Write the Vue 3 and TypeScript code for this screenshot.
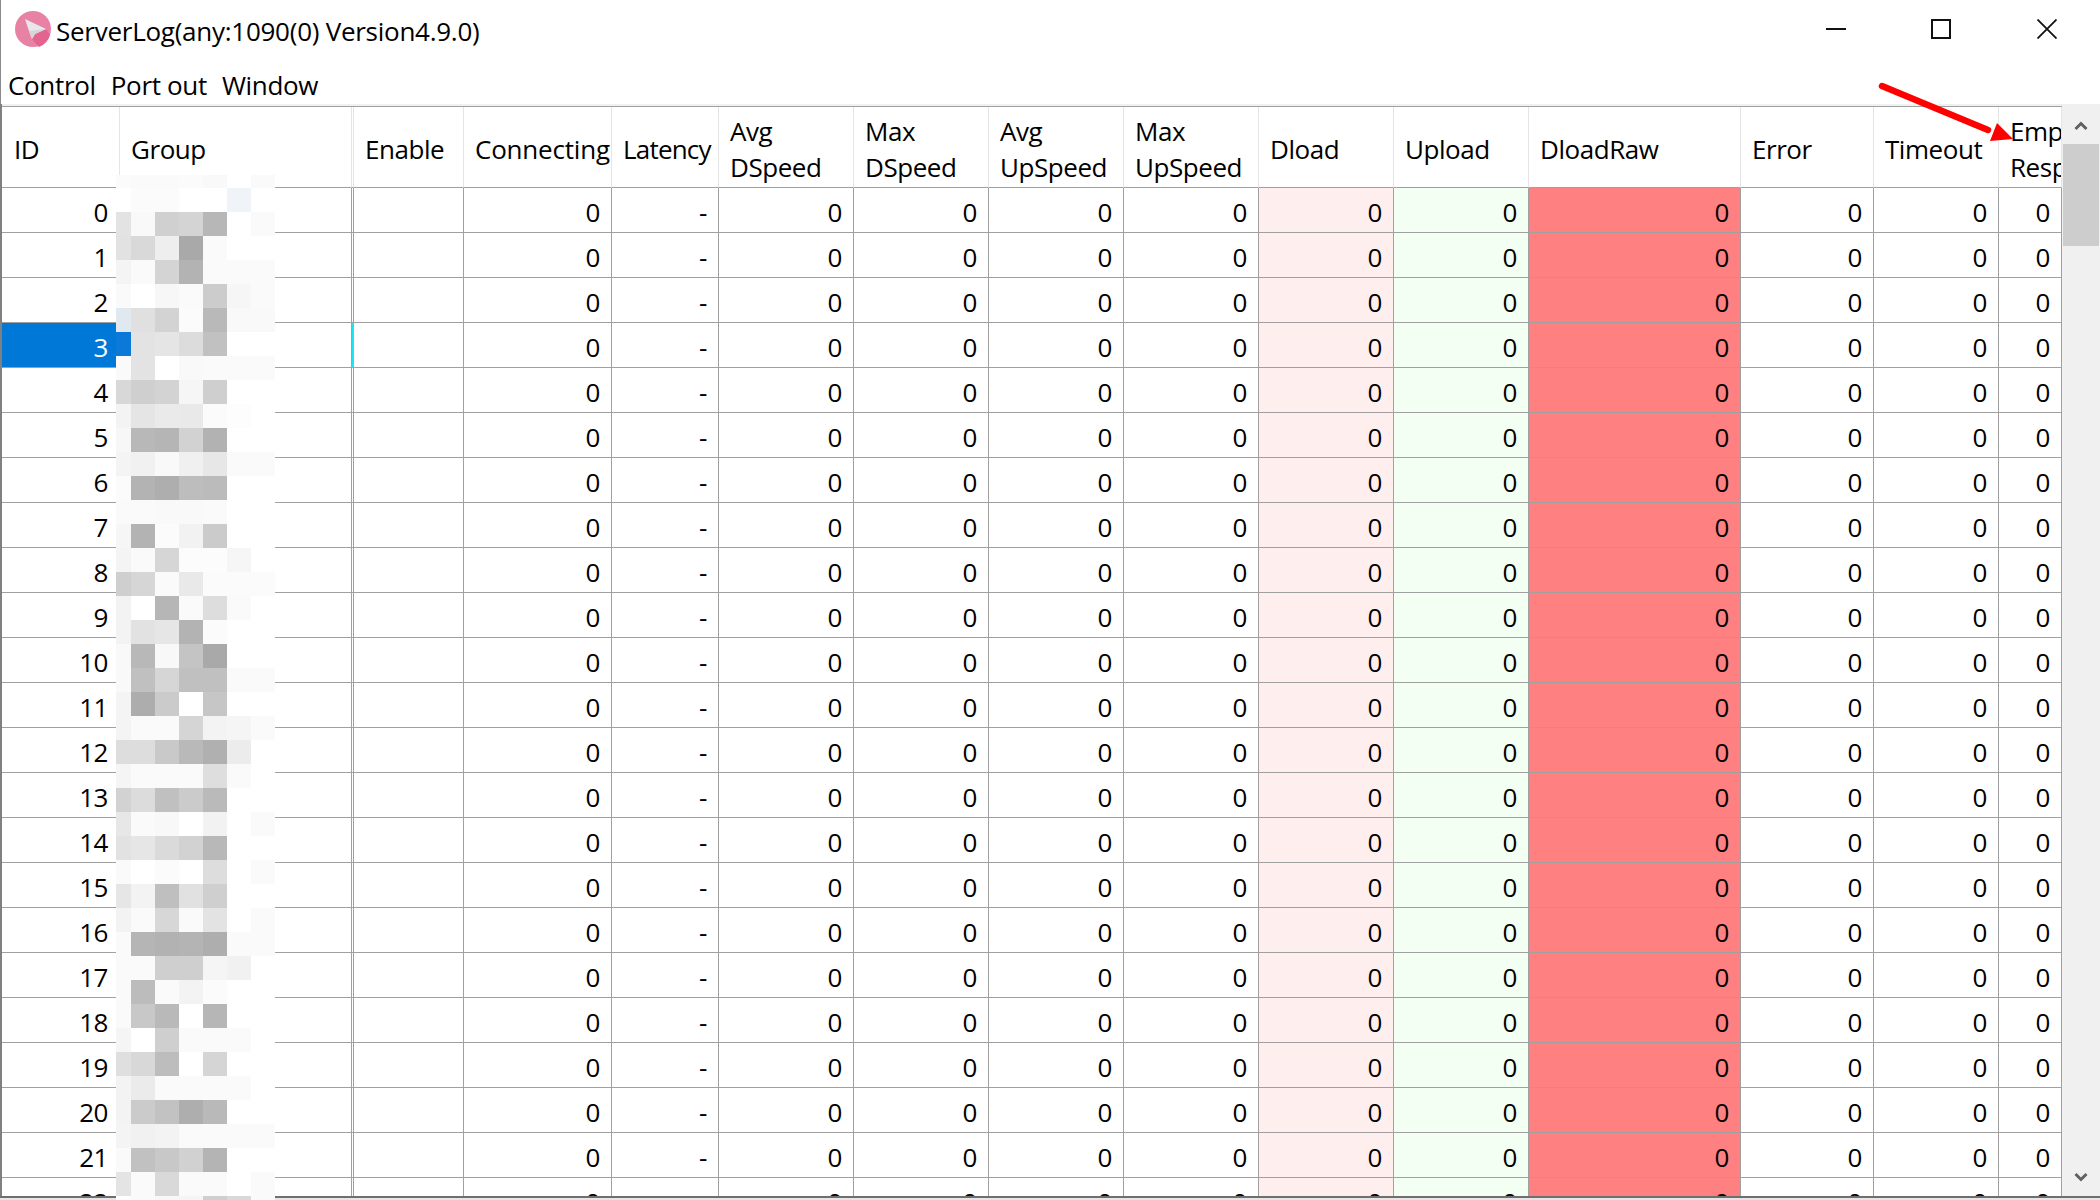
<script setup lang="ts">
interface Column {
  key: string
  lines: string[]
}

const columns: Column[] = [
  { key: 'id', lines: ['ID'] },
  { key: 'group', lines: ['Group'] },
  { key: 'split', lines: [] },
  { key: 'enable', lines: ['Enable'] },
  { key: 'connecting', lines: ['Connecting'] },
  { key: 'latency', lines: ['Latency'] },
  { key: 'avgd', lines: ['Avg', 'DSpeed'] },
  { key: 'maxd', lines: ['Max', 'DSpeed'] },
  { key: 'avgu', lines: ['Avg', 'UpSpeed'] },
  { key: 'maxu', lines: ['Max', 'UpSpeed'] },
  { key: 'dload', lines: ['Dload'] },
  { key: 'upload', lines: ['Upload'] },
  { key: 'dloadraw', lines: ['DloadRaw'] },
  { key: 'error', lines: ['Error'] },
  { key: 'timeout', lines: ['Timeout'] },
  { key: 'empty', lines: ['Empty', 'Response'] }
]

const rowIndexes: number[] = Array.from({ length: 23 }, (_, i) => i)

function cellText(key: string, row: number): string {
  if (key === 'id') return String(row)
  if (key === 'group' || key === 'split' || key === 'enable') return ''
  if (key === 'latency') return '-'
  return '0'
}

const mosaicRows: string[] = [
  'fb fa fa fb f9 ff fa',
  'ff fb fb ff ff f0f3f8 ff',
  'e3 f9 d0 d4 b7 ff fa',
  'e2 d9 ee a9 fa ff ff',
  'f4 fa d4 b3 fa fa fa',
  'fa ff f7 fa cc f6 fa',
  'e0e8f0 e0 d3 fb b9 f9 f9',
  '0c78d8 e3 e5 dc c1 ff ff',
  'fa e3 ff f9 fa fa fa',
  'd8 cf d3 f6 cf ff ff',
  'f3 e5 ea e9 fb fd ff',
  'f7 b8 b5 d2 b2 ff ff',
  'f4 f1 f9 f0 e7 fa fa',
  'fb b3 ae bd bb ff ff',
  'fa fa f9 f9 fa ff ff',
  'f6 b3 fb f2 cb ff ff',
  'f4 fa d6 fc fc f6 ff',
  'cf d6 fa e9 fb fb fb',
  'f3 ff b6 fa dd fa ff',
  'f3 e2 e6 b3 fb ff ff',
  'f9 b8 f8 c4 a9 ff ff',
  'f9 c0 d6 c0 c0 fa fa',
  'f4 ad cb ff c6 ff ff',
  'f4 fa fa d5 f3 f5 fa',
  'dd dd c9 b9 b0 ec ff',
  'f5 fa fa fa de fa ff',
  'd2 dc c0 cb ba ff ff',
  'e7 fa f8 ff f2 ff fa',
  'e2 e6 da d2 b8 ff ff',
  'fa ff fb ff dd ff fa',
  'e6 f3 bf e1 cf ff ff',
  'f3 fa d7 fa e3 ff fa',
  'fa b5 b2 b4 ae fa fa',
  'fa fa cf cf f5 f1 ff',
  'fa bc fa f3 fb ff ff',
  'fa c8 b9 ff b6 ff ff',
  'f5 ff cf fa fa fa ff',
  'df d8 bd ff d5 ff ff',
  'f3 eb fa fa fa fa ff',
  'f3 cb c2 ae b9 ff ff',
  'f4 f1 f3 fa fa fa fa',
  'fa c1 c8 d1 b4 ff ff',
  'e4 fa d9 fa fa ff fa',
  'fe fa f7 f5 cf d9 fa'
]

const mosaicCells: string[] = mosaicRows.flatMap((row) =>
  row.split(' ').map((c) => (c.length === 2 ? `#${c}${c}${c}` : `#${c}`))
)
</script>

<template>
  <div class="window">
    <header class="titlebar">
      <svg class="app-icon" width="36" height="36" viewBox="0 0 36 36">
        <circle cx="18" cy="18" r="18" fill="#e882a4" />
        <path d="M31 18 L20 23 L17 28 L16 27 L24 36 A18 18 0 0 0 35 24 Z" fill="#e2648f" />
        <path d="M10 8 L31 18 L20 23 L17 28 L14 20 Z" fill="#e8e8ec" />
        <path d="M31 18 L14 20 L17 28 L20 23 Z" fill="#d4d4da" />
      </svg>
      <span class="title">ServerLog(any:1090(0) Version4.9.0)</span>
      <div class="controls">
        <svg width="20" height="20" viewBox="0 0 20 20" class="ctl ctl-min"><path d="M0 10h20" stroke="#111" stroke-width="2" /></svg>
        <svg width="20" height="20" viewBox="0 0 20 20" class="ctl ctl-max"><rect x="1" y="1" width="18" height="18" fill="none" stroke="#111" stroke-width="2" /></svg>
        <svg width="20" height="20" viewBox="0 0 20 20" class="ctl ctl-close"><path d="M0.5 0.5 19.5 19.5M19.5 0.5 0.5 19.5" stroke="#111" stroke-width="1.8" /></svg>
      </div>
    </header>

    <nav class="menubar">
      <span class="menu-item">Control</span>
      <span class="menu-item">Port out</span>
      <span class="menu-item">Window</span>
    </nav>

    <main class="content">
      <div class="table-area">
        <div class="grid">
          <div
            v-for="col in columns"
            :key="col.key"
            class="head"
            :class="`c-${col.key}`"
          >
            <span v-for="line in col.lines" :key="line" class="head-line">{{ line }}</span>
          </div>
          <template v-for="row in rowIndexes" :key="row">
            <div
              v-for="col in columns"
              :key="col.key"
              class="cell"
              :class="[`c-${col.key}`, { selected: row === 3 }]"
            >{{ cellText(col.key, row) }}</div>
          </template>
        </div>
      </div>
      <aside class="scrollbar">
        <svg class="chev chev-up" width="14" height="10" viewBox="0 0 14 10"><path d="M1.5 8 7 2.5 12.5 8" fill="none" stroke="#606060" stroke-width="3" /></svg>
        <div class="thumb"></div>
        <svg class="chev chev-down" width="14" height="10" viewBox="0 0 14 10"><path d="M1.5 2 7 7.5 12.5 2" fill="none" stroke="#606060" stroke-width="3" /></svg>
      </aside>
    </main>
    <div class="statusline"></div>

    <div class="mosaic">
      <i v-for="(color, i) in mosaicCells" :key="i" :style="{ background: color }"></i>
    </div>

    <svg class="arrow" width="150" height="70" viewBox="0 0 150 70">
      <path d="M12 11 L118 55" stroke="#ff0000" stroke-width="6.5" stroke-linecap="round" fill="none" />
      <path d="M143 64 L127 48 L120 66 Z" fill="#ff0000" />
    </svg>
  </div>
</template>

<style>
html,
body {
  margin: 0;
  background: #fff;
}
</style>

<style scoped>
.window {
  position: relative;
  width: 2100px;
  height: 1200px;
  overflow: hidden;
  display: flex;
  flex-direction: column;
  background: #fff;
  color: #000;
  font-family: "Open Sans", "Noto Sans", sans-serif;
  font-size: 26px;
  letter-spacing: -0.45px;
}

.titlebar {
  flex: none;
  height: 64px;
  display: flex;
  align-items: flex-start;
  border-left: 1px solid #8a8a8a;
  box-sizing: border-box;
  padding-left: 14px;
}

.app-icon {
  margin-top: 11px;
  flex: none;
}

.title {
  margin-left: 5px;
  margin-top: 13px;
  line-height: 36px;
  letter-spacing: -0.26px;
}

.controls {
  margin-left: auto;
  display: flex;
  margin-top: 19px;
  margin-right: 43px;
}

.ctl {
  display: block;
}

.ctl-max {
  margin-left: 85px;
}

.ctl-close {
  margin-left: 86px;
}

.menubar {
  flex: none;
  height: 40px;
  display: flex;
  gap: 15px;
  padding-left: 7px;
  line-height: 42px;
  letter-spacing: -0.33px;
  border-left: 1px solid #8a8a8a;
  box-sizing: border-box;
}

.content {
  flex: none;
  height: 1092px;
  display: flex;
}

.table-area {
  flex: none;
  width: 2062px;
  box-sizing: border-box;
  padding-top: 2px;
  background: linear-gradient(#f0f0f0, #f0f0f0) top / 100% 2px no-repeat #fff;
  overflow: hidden;
  border-left: 2px solid #808080;
}

.grid {
  display: grid;
  grid-template-columns: 118px 232px 2px 110px 148px 107px 135px 135px 135px 135px 135px 135px 212px 133px 125px 63px;
  grid-auto-rows: 45px;
  grid-template-rows: 81px;
  border-top: 1px solid #a0a0a0;
}

.head {
  box-sizing: border-box;
  display: flex;
  flex-direction: column;
  justify-content: center;
  padding: 3px 0 0 11px;
  border-right: 1px solid #e5e5e5;
  border-bottom: 1px solid #a0a0a0;
  overflow: hidden;
  white-space: nowrap;
  line-height: 36px;
}

.head.c-split {
  padding: 0;
}

.head.c-id {
  padding-left: 12px;
}

.head.c-connecting {
  letter-spacing: -0.2px;
}

.head.c-latency {
  letter-spacing: -0.8px;
}

.cell {
  box-sizing: border-box;
  padding: 4px 11px 0 0;
  text-align: right;
  line-height: 40px;
  border-right: 1px solid #a0a0a0;
  border-bottom: 1px solid #a0a0a0;
  overflow: hidden;
}

.cell.c-split {
  padding: 0;
}

.cell.c-split.selected {
  background: #1ee4f2;
  border-right-color: #1ee4f2;
}

.cell.c-id.selected {
  background: #0078d7;
  color: #fff;
}

.cell.c-dload {
  background: #ffeeee;
}

.cell.c-upload {
  background: #f3fff3;
}

.cell.c-dloadraw {
  background: #ff8080;
}

.head-line {
  display: block;
}

.scrollbar {
  flex: 1;
  position: relative;
  background: #f0f0f0;
  display: flex;
  flex-direction: column;
  align-items: center;
  padding: 17px 1px 0;
}

.chev {
  flex: none;
  display: block;
}

.thumb {
  flex: none;
  align-self: stretch;
  height: 102px;
  margin-top: 13px;
  background: #cdcdcd;
}

.chev-down {
  margin-top: auto;
  margin-bottom: 14px;
}

.statusline {
  flex: 1;
  border-top: 2px solid #6f6f6f;
  background: #e6e6e6;
}

.mosaic {
  position: absolute;
  left: 116px;
  top: 175px;
  width: 159px;
  height: 1025px;
  overflow: hidden;
  display: grid;
  grid-template-columns: 15px repeat(6, 24px);
  grid-template-rows: 13px;
  grid-auto-rows: 24px;
}

.mosaic i {
  display: block;
}

.arrow {
  position: absolute;
  left: 1870px;
  top: 75px;
}
</style>
